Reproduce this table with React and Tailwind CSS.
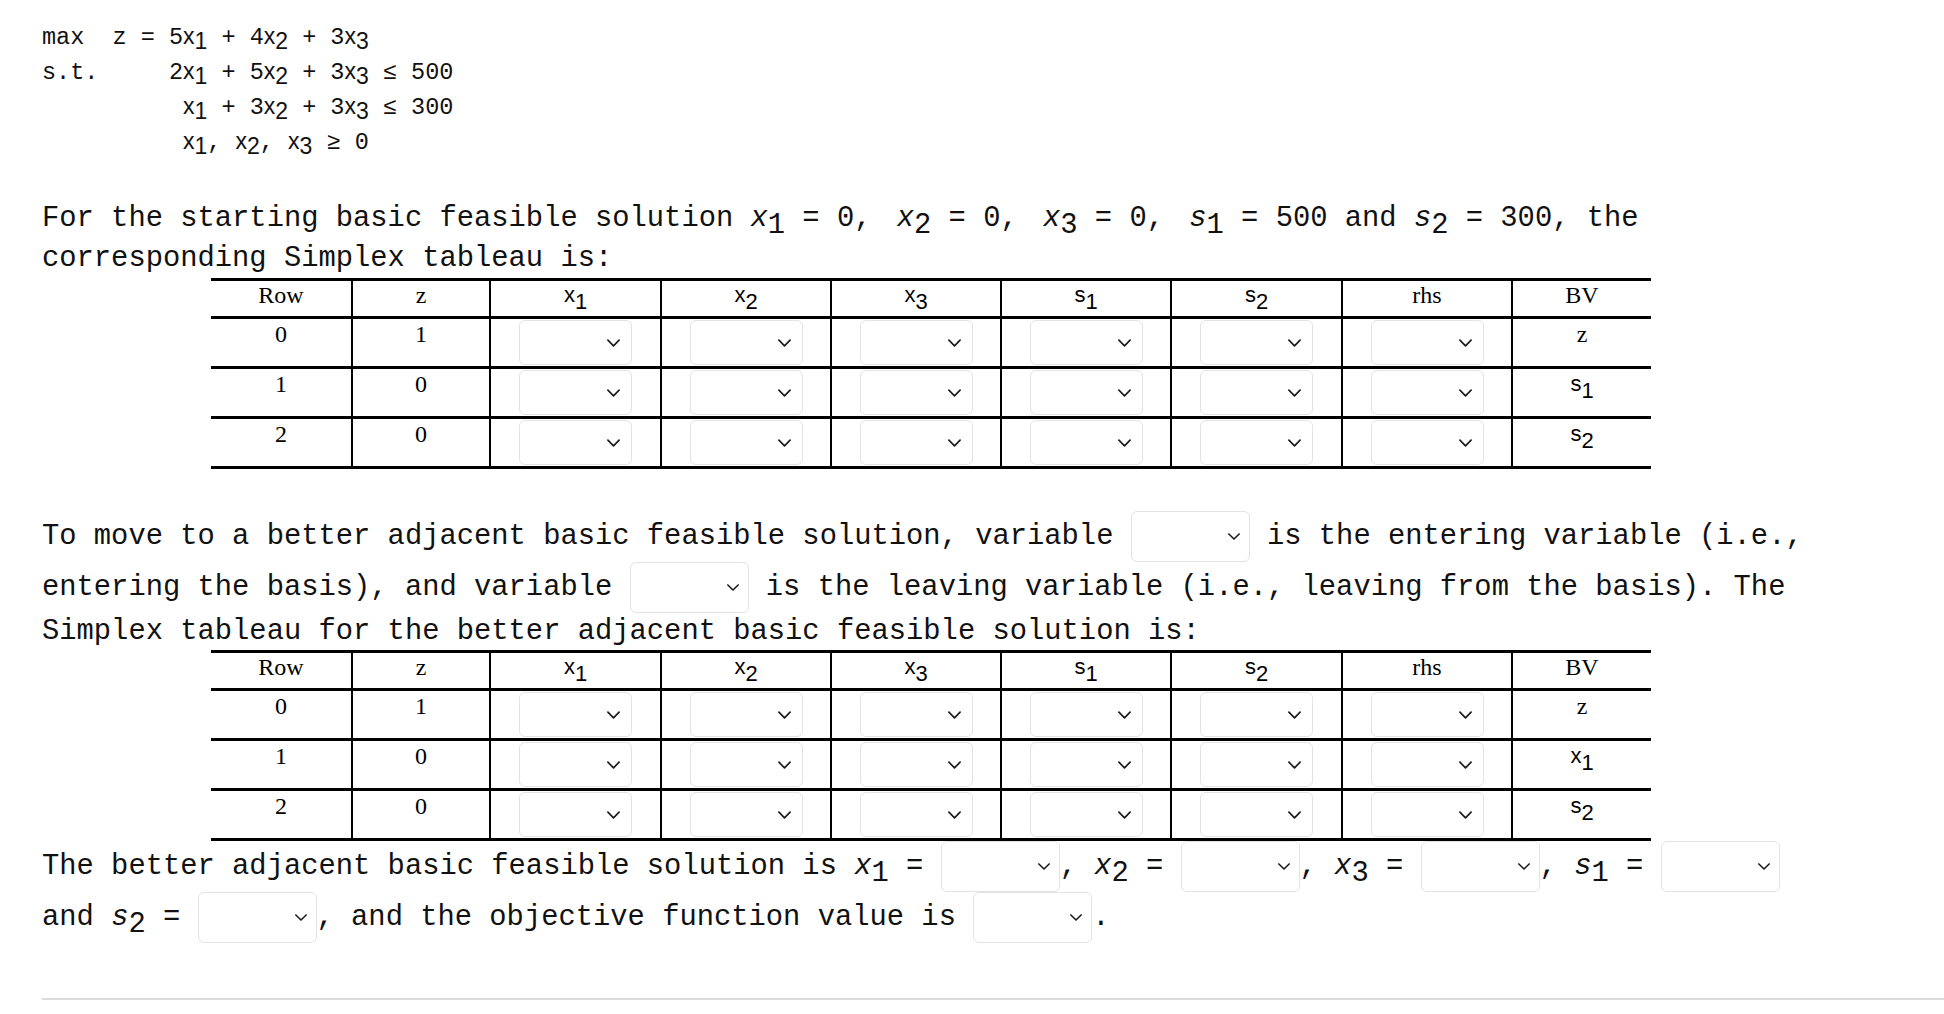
import React from "react";

const mono = "font-['Liberation_Mono','DejaVu_Sans_Mono',monospace]";
const serif = "font-['Liberation_Serif','Times_New_Roman',serif]";
const sans = "font-['Liberation_Sans',Arial,sans-serif]";

// small chevron used by every dropdown
const Chevron = ({ className }) => (
  <svg className={className} viewBox="0 0 14 8" fill="none" stroke="#1a1a1a" strokeWidth="1.8" strokeLinecap="round" strokeLinejoin="round">
    <path d="M1 1l6 6 6-6" />
  </svg>
);

// inline dropdown inside the running text
const Pick = () => (
  <span className="inline-flex h-[51px] w-[119px] items-center justify-end rounded-md border border-[#e3e3e3] bg-white pr-[9px] align-middle">
    <Chevron className="h-[7px] w-[12px]" />
  </span>
);

// dropdown inside a tableau cell
const CellPick = () => (
  <div className="flex h-[45px] w-[113px] items-center justify-end rounded-md border border-[#e3e3e3] bg-white pr-[11px]">
    <Chevron className="h-[8px] w-[13px]" />
  </div>
);

// variable in the running (monospace) text
const M = ({ v, s }) => (
  <span>
    <i>{v}</i>
    <span className="relative top-[7px]">{s}</span>
  </span>
);

// variable in the formulation block
const FV = ({ s }) => (
  <span className={`${sans} text-[23px] leading-none`}>
    x<span className="relative top-[5px]">{s}</span>
  </span>
);

// variable in the tableau (sans)
const TV = ({ v, s }) => (
  <span className={`${sans} text-[22px]`}>
    {v}
    <span className="relative top-[7px]">{s}</span>
  </span>
);

const Gap = () => <span className="inline-block w-[8px]" />;

function Tableau({ bv }) {
  const rows = [
    ["0", "1"],
    ["1", "0"],
    ["2", "0"],
  ];
  const heads = [
    ["x", "1"],
    ["x", "2"],
    ["x", "3"],
    ["s", "1"],
    ["s", "2"],
  ];
  return (
    <div className="mx-auto w-[1440px] border-b-[3px] border-black text-black">
      <div className="grid h-[38px] grid-cols-[140px_138px_171px_170px_170px_170px_171px_170px_140px] border-t-[3px] border-black">
        <div className={`${serif} pt-[2px] text-center text-[24px] leading-none`}>Row</div>
        <div className={`${serif} border-l-2 border-black pt-[2px] text-center text-[24px] leading-none`}>z</div>
        {heads.map(([v, s]) => (
          <div key={v + s} className="border-l-2 border-black pt-[3px] text-center leading-none">
            <TV v={v} s={s} />
          </div>
        ))}
        <div className={`${serif} border-l-2 border-black pt-[2px] text-center text-[24px] leading-none`}>rhs</div>
        <div className={`${serif} border-l-2 border-black pt-[2px] text-center text-[24px] leading-none`}>BV</div>
      </div>

      {rows.map((r, i) => (
        <div key={i} className="grid h-[50px] grid-cols-[140px_138px_171px_170px_170px_170px_171px_170px_140px] border-t-[3px] border-black">
          <div className={`${serif} pt-[6px] text-center text-[24px] leading-[18px]`}>{r[0]}</div>
          <div className={`${serif} border-l-2 border-black pt-[6px] text-center text-[24px] leading-[18px]`}>{r[1]}</div>
          {[0, 1, 2, 3, 4, 5].map((j) => (
            <div key={j} className="flex items-center justify-center border-l-2 border-black">
              <CellPick />
            </div>
          ))}
          <div className="border-l-2 border-black pt-[6px] text-center leading-[18px]">
            {bv[i] === "z" ? (
              <span className={`${serif} text-[24px]`}>z</span>
            ) : (
              <TV v={bv[i][0]} s={bv[i][1]} />
            )}
          </div>
        </div>
      ))}
    </div>
  );
}

export default function App() {
  return (
    <div className="min-h-screen bg-white pl-[42px] pt-[20px] text-[#111]">
      <div className="w-[1778px]">
        {/* formulation */}
        <div className={`${mono} text-[23.5px] leading-[35px] whitespace-pre`}>
          <div className="h-[35px]">
            {"max  z = 5"}
            <FV s="1" />
            {" + 4"}
            <FV s="2" />
            {" + 3"}
            <FV s="3" />
          </div>
          <div className="h-[35px]">
            {"s.t.     2"}
            <FV s="1" />
            {" + 5"}
            <FV s="2" />
            {" + 3"}
            <FV s="3" />
            {" ≤ 500"}
          </div>
          <div className="h-[35px]">
            {"          "}
            <FV s="1" />
            {" + 3"}
            <FV s="2" />
            {" + 3"}
            <FV s="3" />
            {" ≤ 300"}
          </div>
          <div className="h-[35px]">
            {"          "}
            <FV s="1" />
            {", "}
            <FV s="2" />
            {", "}
            <FV s="3" />
            {" ≥ 0"}
          </div>
        </div>

        <p className={`${mono} mt-[39px] text-[28.8px] leading-[40px]`}>
          For the starting basic feasible solution <M v="x" s="1" /> = 0,<Gap /> <M v="x" s="2" /> = 0,<Gap />{" "}
          <M v="x" s="3" /> = 0,<Gap /> <M v="s" s="1" /> = 500 and <M v="s" s="2" /> = 300, the corresponding Simplex
          tableau is:
        </p>

        <div className="-mt-[1px]">
          <Tableau bv={["z", "s1", "s2"]} />
        </div>

        <p className={`${mono} mt-[42px] text-[28.8px] leading-[37px]`}>
          To move to a better adjacent basic feasible solution, variable <Pick /> is the entering variable (i.e.,
          entering the basis), and variable <Pick /> is the leaving variable (i.e., leaving from the basis). The Simplex
          tableau for the better adjacent basic feasible solution is:
        </p>

        <Tableau bv={["z", "x1", "s2"]} />

        <p className={`${mono} text-[28.8px] leading-[37px]`}>
          The better adjacent basic feasible solution is <M v="x" s="1" /> = <Pick />, <M v="x" s="2" /> = <Pick />,{" "}
          <M v="x" s="3" /> = <Pick />, <M v="s" s="1" /> = <Pick /> and <M v="s" s="2" /> = <Pick />, and the objective
          function value is <Pick />.
        </p>
      </div>

      <div className="mt-[55px] h-[2px] bg-[#dcdcdc]" />
    </div>
  );
}
